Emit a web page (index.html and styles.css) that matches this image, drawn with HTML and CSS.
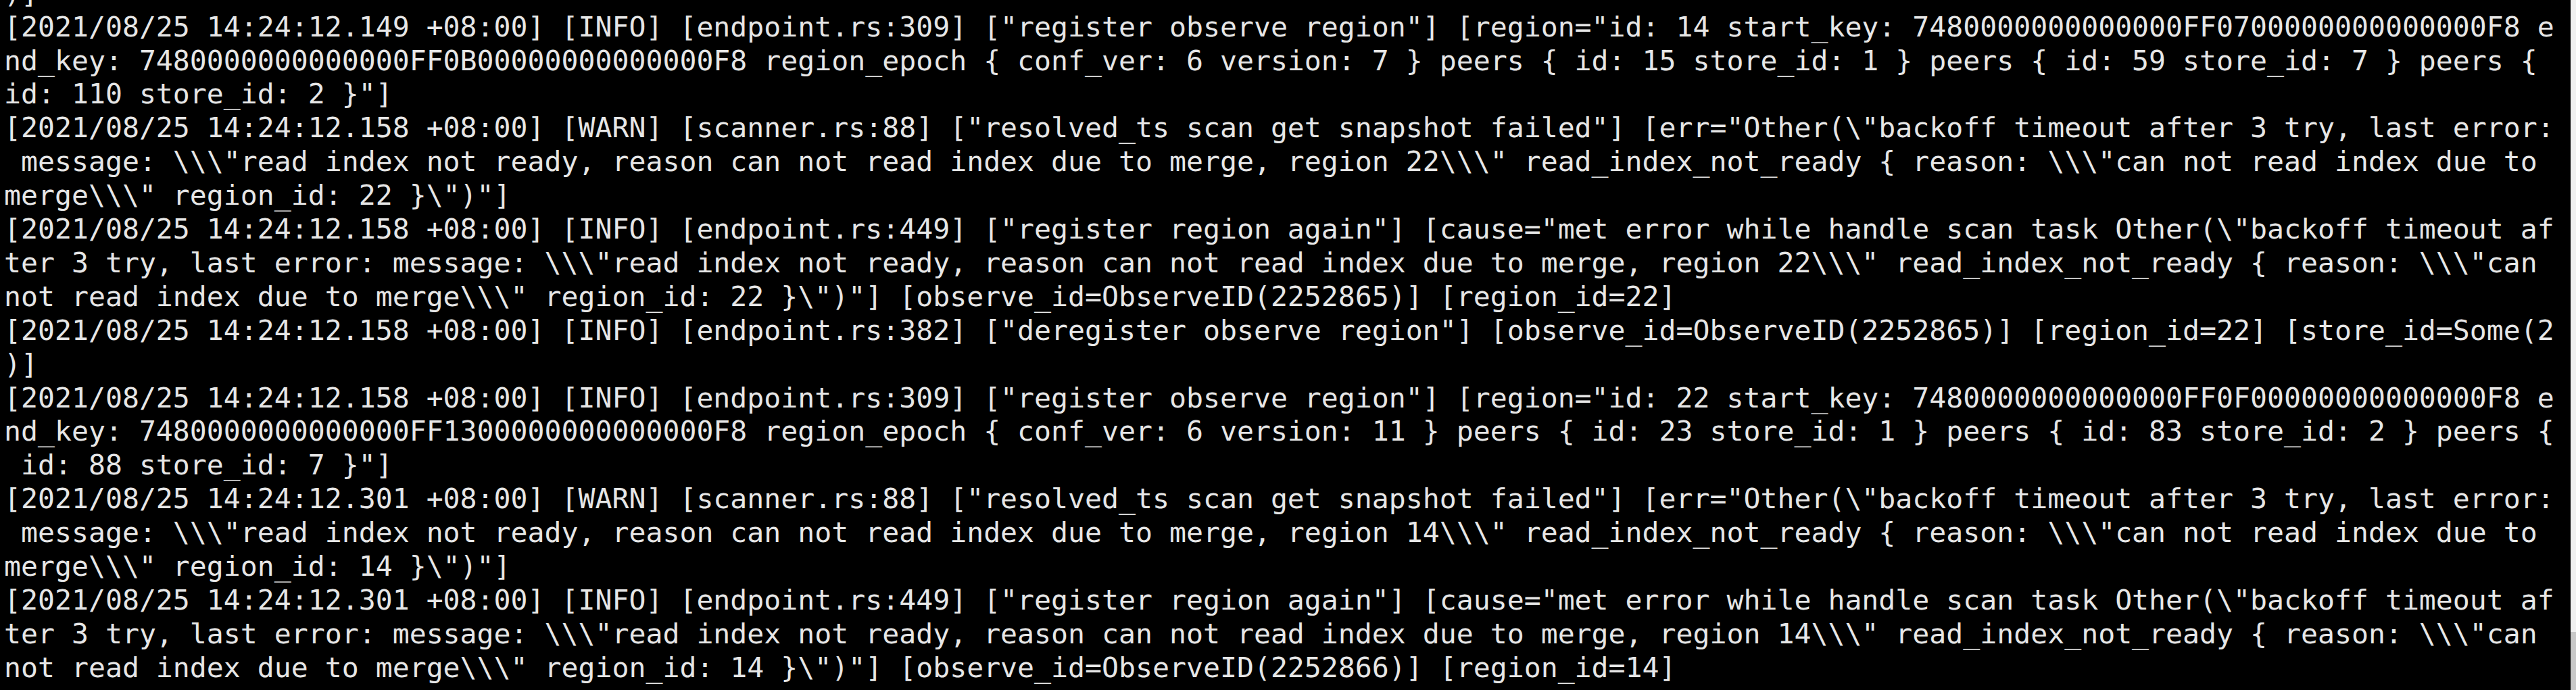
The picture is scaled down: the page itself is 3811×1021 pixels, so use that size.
FILE: index.html
```html
<!DOCTYPE html>
<html>
<head>
<meta charset="utf-8">
<link rel="stylesheet" href="styles.css">
</head>
<body>
<div class="terminal">
  <div class="screen">
    <div class="row">)]</div>
    <div class="row">[2021/08/25 14:24:12.149 +08:00] [INFO] [endpoint.rs:309] ["register observe region"] [region="id: 14 start_key: 7480000000000000FF0700000000000000F8 e</div>
    <div class="row">nd_key: 7480000000000000FF0B00000000000000F8 region_epoch { conf_ver: 6 version: 7 } peers { id: 15 store_id: 1 } peers { id: 59 store_id: 7 } peers { </div>
    <div class="row">id: 110 store_id: 2 }"]</div>
    <div class="row">[2021/08/25 14:24:12.158 +08:00] [WARN] [scanner.rs:88] ["resolved_ts scan get snapshot failed"] [err="Other(\"backoff timeout after 3 try, last error:</div>
    <div class="row"> message: \\\"read index not ready, reason can not read index due to merge, region 22\\\" read_index_not_ready { reason: \\\"can not read index due to </div>
    <div class="row">merge\\\" region_id: 22 }\")"]</div>
    <div class="row">[2021/08/25 14:24:12.158 +08:00] [INFO] [endpoint.rs:449] ["register region again"] [cause="met error while handle scan task Other(\"backoff timeout af</div>
    <div class="row">ter 3 try, last error: message: \\\"read index not ready, reason can not read index due to merge, region 22\\\" read_index_not_ready { reason: \\\"can </div>
    <div class="row">not read index due to merge\\\" region_id: 22 }\")"] [observe_id=ObserveID(2252865)] [region_id=22]</div>
    <div class="row">[2021/08/25 14:24:12.158 +08:00] [INFO] [endpoint.rs:382] ["deregister observe region"] [observe_id=ObserveID(2252865)] [region_id=22] [store_id=Some(2</div>
    <div class="row">)]</div>
    <div class="row">[2021/08/25 14:24:12.158 +08:00] [INFO] [endpoint.rs:309] ["register observe region"] [region="id: 22 start_key: 7480000000000000FF0F00000000000000F8 e</div>
    <div class="row">nd_key: 7480000000000000FF1300000000000000F8 region_epoch { conf_ver: 6 version: 11 } peers { id: 23 store_id: 1 } peers { id: 83 store_id: 2 } peers {</div>
    <div class="row"> id: 88 store_id: 7 }"]</div>
    <div class="row">[2021/08/25 14:24:12.301 +08:00] [WARN] [scanner.rs:88] ["resolved_ts scan get snapshot failed"] [err="Other(\"backoff timeout after 3 try, last error:</div>
    <div class="row"> message: \\\"read index not ready, reason can not read index due to merge, region 14\\\" read_index_not_ready { reason: \\\"can not read index due to </div>
    <div class="row">merge\\\" region_id: 14 }\")"]</div>
    <div class="row">[2021/08/25 14:24:12.301 +08:00] [INFO] [endpoint.rs:449] ["register region again"] [cause="met error while handle scan task Other(\"backoff timeout af</div>
    <div class="row">ter 3 try, last error: message: \\\"read index not ready, reason can not read index due to merge, region 14\\\" read_index_not_ready { reason: \\\"can </div>
    <div class="row">not read index due to merge\\\" region_id: 14 }\")"] [observe_id=ObserveID(2252866)] [region_id=14]</div>
  </div>
  <div class="scrollbar">
    <div class="track"></div>
    <div class="thumb"></div>
  </div>
</div>
</body>
</html>
```

FILE: styles.css
```css
html, body {
  margin: 0;
  padding: 0;
  height: 100%;
  overflow: hidden;
  background: #000000;
}

.terminal {
  display: flex;
  flex-direction: row;
  width: 100%;
  height: 1021px;
  overflow: hidden;
}

.screen {
  flex: 1;
  min-width: 0;
  overflow: hidden;
  background: #000000;
  color: #e6e6e6;
  font-family: "DejaVu Sans Mono", "Liberation Mono", monospace;
  font-size: 41.5px;
  line-height: 49.9px;
  padding-left: 6px;
}

.row {
  white-space: pre;
  height: 49.9px;
}

.row:first-child {
  margin-top: -35.2px;
}

.scrollbar {
  width: 8px;
  flex: 0 0 8px;
  display: flex;
  flex-direction: column;
  background: #f0f0f0;
}

.track {
  flex: 1;
}

.thumb {
  height: 86px;
  background: #c8c8c8;
}
```
